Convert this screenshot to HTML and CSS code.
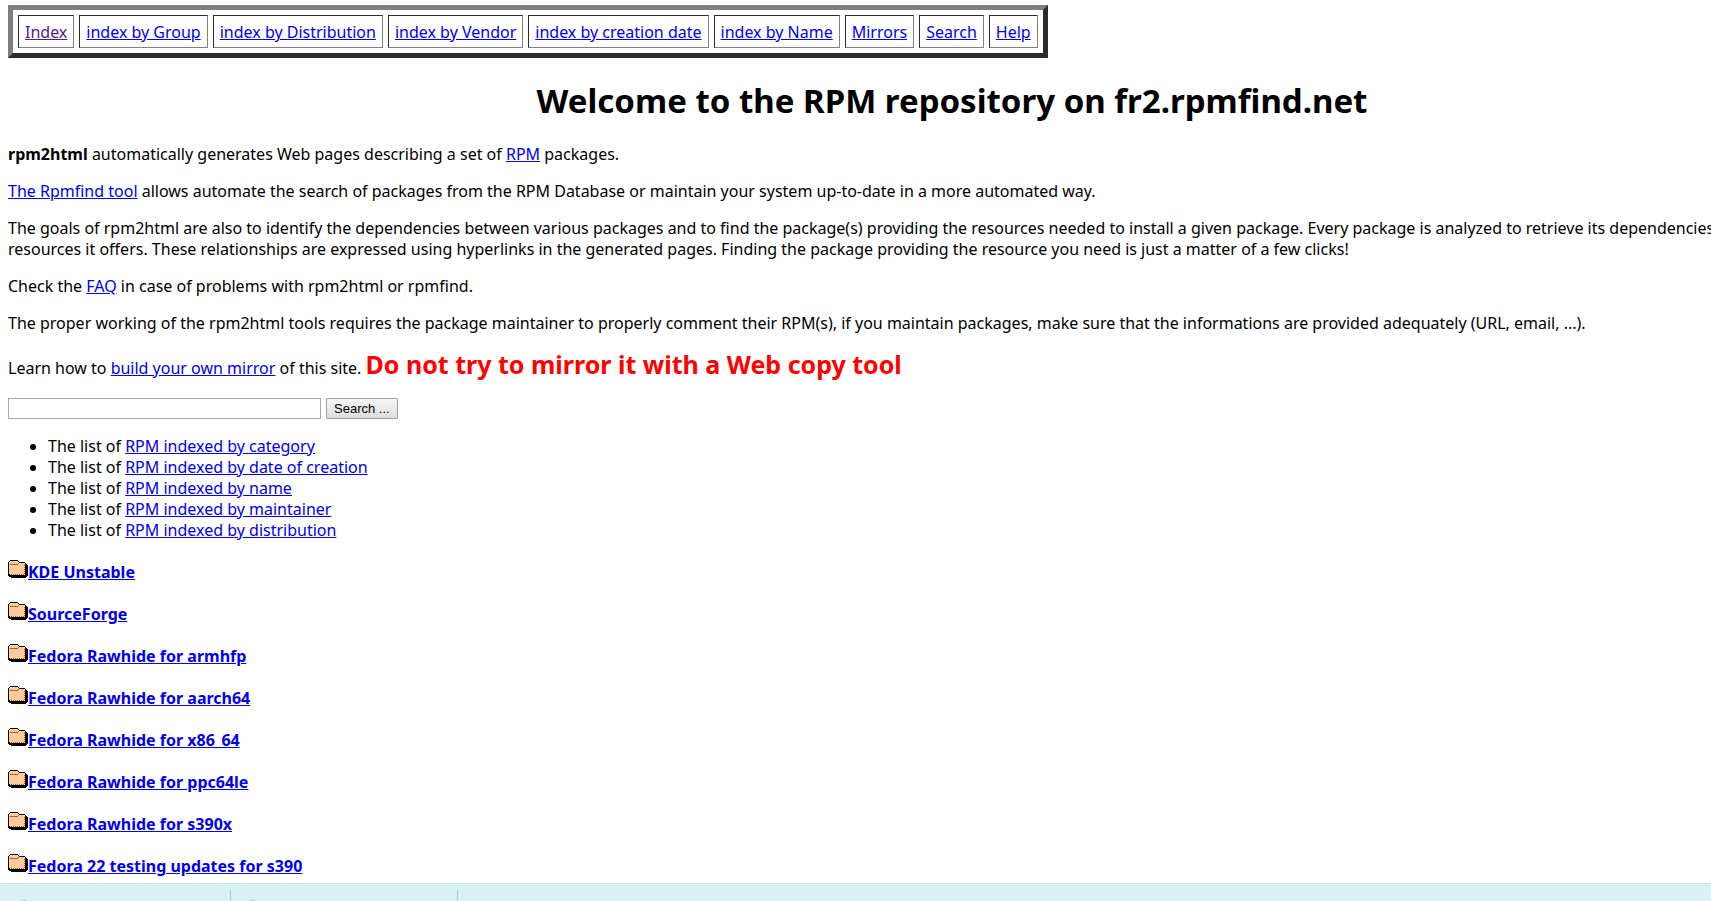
FILE: index.html
```
<!DOCTYPE html>
<html lang="en">
<head>
  <meta charset="UTF-8">
  <meta name="viewport" content="width=device-width, initial-scale=1.0">
  <title>RPM repository on fr2.rpmfind.net</title>
  <link rel="stylesheet" href="styles.css">
</head>
<body>
  <svg class="sprite" aria-hidden="true">
    <symbol id="folder" viewBox="0 0 20 18">
      <path fill="#000" d="M2 0h8v1h1v1h6v1h1v1h1v1h1v11h-1v1h-1v1H3v-1H1v-1H0V2h1V1h1z"/>
      <path fill="#fc9" d="M2 1h8v1h1v1h6v12H2v-1H1V2h1z"/>
      <path fill="#963" d="M2 4h8v1H2zM10 3h1v1h-1z"/>
      <path stroke="#963" stroke-dasharray="1 1" fill="none" d="M16.500 5v10M3 14.500h13"/>
    </symbol>
  </svg>

  <table class="menu">
    <tbody>
      <tr>
        <td><a class="visited" href="#">Index</a></td>
        <td><a href="#">index by Group</a></td>
        <td><a href="#">index by Distribution</a></td>
        <td><a href="#">index by Vendor</a></td>
        <td><a href="#">index by creation date</a></td>
        <td><a href="#">index by Name</a></td>
        <td><a href="#">Mirrors</a></td>
        <td><a href="#">Search</a></td>
        <td><a href="#">Help</a></td>
      </tr>
    </tbody>
  </table>

  <h1>Welcome to the RPM repository on fr2.rpmfind.net</h1>

  <p><strong>rpm2html</strong> automatically generates Web pages describing a set of <a href="#">RPM</a> packages.</p>
  <p><a href="#">The Rpmfind tool</a> allows automate the search of packages from the RPM Database or maintain your system up-to-date in a more automated way.</p>
  <p>The goals of rpm2html are also to identify the dependencies between various packages and to find the package(s) providing the resources needed to install a given package. Every package is analyzed to retrieve its dependencies and the<br>resources it offers. These relationships are expressed using hyperlinks in the generated pages. Finding the package providing the resource you need is just a matter of a few clicks!</p>
  <p>Check the <a href="#">FAQ</a> in case of problems with rpm2html or rpmfind.</p>
  <p>The proper working of the rpm2html tools requires the package maintainer to properly comment their RPM(s), if you maintain packages, make sure that the informations are provided adequately (URL, email, ...).</p>
  <p>Learn how to <a href="#">build your own mirror</a> of this site. <strong class="warning">Do not try to mirror it with a Web copy tool</strong></p>

  <form class="search">
    <input type="text" name="query" aria-label="Search query">
    <button type="button">Search ...</button>
  </form>

  <ul>
    <li>The list of <a href="#">RPM indexed by category</a></li>
    <li>The list of <a href="#">RPM indexed by date of creation</a></li>
    <li>The list of <a href="#">RPM indexed by name</a></li>
    <li>The list of <a href="#">RPM indexed by maintainer</a></li>
    <li>The list of <a href="#">RPM indexed by distribution</a></li>
  </ul>

  <h4><svg class="folder"><use href="#folder"/></svg><a href="#">KDE Unstable</a></h4>
  <h4><svg class="folder"><use href="#folder"/></svg><a href="#">SourceForge</a></h4>
  <h4><svg class="folder"><use href="#folder"/></svg><a href="#">Fedora Rawhide for armhfp</a></h4>
  <h4><svg class="folder"><use href="#folder"/></svg><a href="#">Fedora Rawhide for aarch64</a></h4>
  <h4><svg class="folder"><use href="#folder"/></svg><a href="#">Fedora Rawhide for x86_64</a></h4>
  <h4><svg class="folder"><use href="#folder"/></svg><a href="#">Fedora Rawhide for ppc64le</a></h4>
  <h4><svg class="folder"><use href="#folder"/></svg><a href="#">Fedora Rawhide for s390x</a></h4>
  <h4><svg class="folder"><use href="#folder"/></svg><a href="#">Fedora 22 testing updates for s390</a></h4>

  <div class="dock">
    <div class="dock-item first"></div>
    <div class="dock-item"></div>
  </div>
</body>
</html>
```
FILE: styles.css
```
html {
  overflow: hidden;
}
body {
  font-family: "Noto Sans", "Open Sans", sans-serif;
  font-size: 16px;
  line-height: 21px;
  color: #000;
  background-color: #fff;
  margin: 5px 8px 8px;
  min-width: 1888px;
}
a {
  color: #0000ee;
}
a.visited {
  color: #551a8b;
}
.sprite {
  display: none;
}
.menu {
  border: 5px solid;
  border-color: #808080 #2c2c2c #2c2c2c #808080;
  border-spacing: 5px;
}
.menu td {
  border: 1px solid;
  border-color: #2c2c2c #808080 #808080 #2c2c2c;
  padding: 6px 6px 4px;
  white-space: nowrap;
}
h1 {
  font-size: 33px;
  line-height: 43px;
  margin: 21px 0 22px;
  text-align: center;
}
p {
  margin: 16px 0;
}
.warning {
  color: #ff0000;
  font-size: 25px;
  line-height: 29px;
}
.search {
  display: flex;
  gap: 5px;
  margin: 19px 0 17px;
}
.search input {
  box-sizing: border-box;
  width: 313px;
  height: 21px;
  border: 1px solid #a9a9a9;
  padding: 1px;
}
.search button {
  box-sizing: border-box;
  height: 21px;
  border: 1px solid #a0a0a0;
  border-radius: 1px;
  padding: 0 7px;
  font: 13px "Liberation Sans", Arial, sans-serif;
  color: #000;
  background: linear-gradient(#f6f6f6, #dddddd);
}
ul {
  margin: 17px 0 19px;
  padding-left: 40px;
}
h4 {
  font-size: 16px;
  height: 21px;
  margin: 0 0 21px;
}
.folder {
  width: 20px;
  height: 18px;
  shape-rendering: crispEdges;
}
.dock {
  position: fixed;
  left: 0;
  right: 0;
  bottom: 0;
  display: flex;
  height: 17px;
  padding-left: 3px;
  border-top: 1px solid #c9e2e7;
  background-color: #d9f0f4;
}
.dock-item {
  box-sizing: border-box;
  width: 227px;
  height: 11px;
  margin-top: 6px;
  border-right: 1px solid #8fd3dc;
  background: linear-gradient(#8fd8f8, #8fd8f8) 19px 10px / 5px 1px no-repeat;
}
.dock-item.first {
  width: 228px;
}
```
